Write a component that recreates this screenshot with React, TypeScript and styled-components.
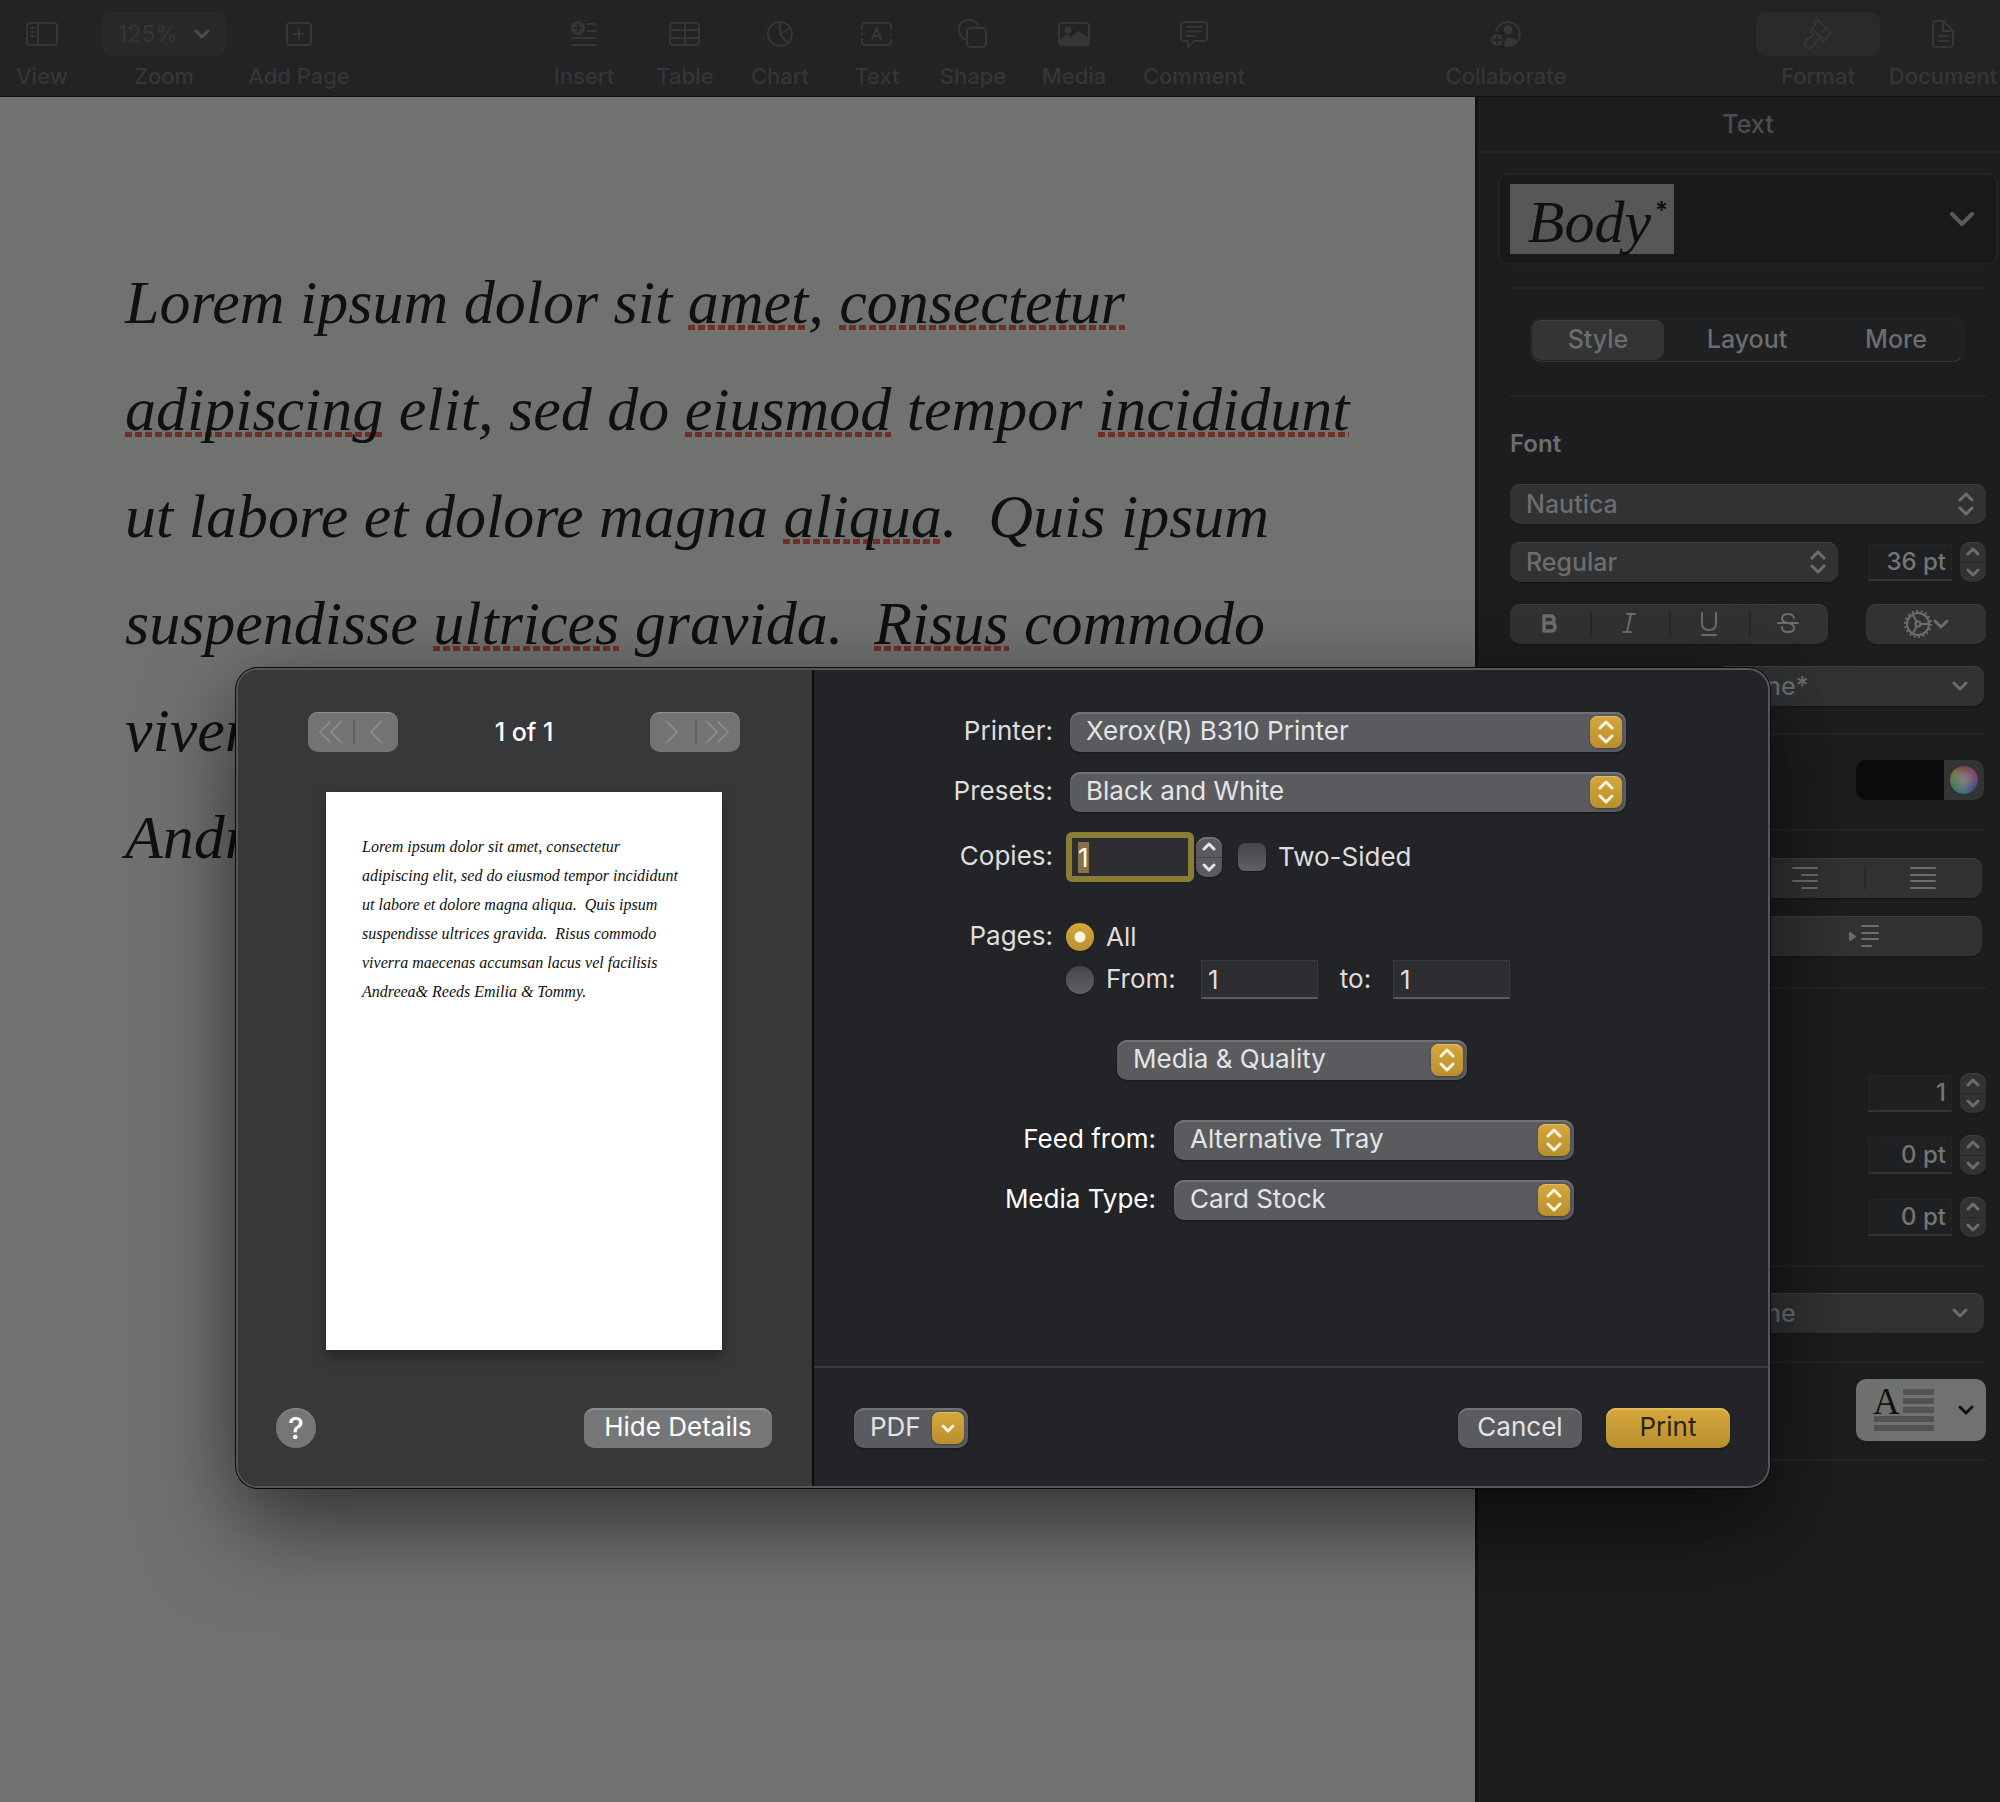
import React, { useEffect, useRef, useState } from "react";
import styled, { createGlobalStyle, css } from "styled-components";

const sans = `Inter, "Open Sans", "Liberation Sans", sans-serif`;
const script = `"Liberation Serif", "DejaVu Serif", serif`;

const GlobalStyle = createGlobalStyle`
  *, *::before, *::after { box-sizing: border-box; }
  body { margin: 0; background: #707270; font-family: ${sans}; }
  button, input, select { font-family: inherit; margin: 0; }
`;

/* ---------- shell ---------- */

const Shell = styled.div`
  position: relative;
  display: flex;
  flex-direction: column;
  min-height: 100vh;
  overflow: hidden;
`;

const Toolbar = styled.header`
  display: flex;
  justify-content: space-between;
  height: 97px;
  padding: 12px 4px 0 0;
  background: #222325;
  border-bottom: 1px solid #0f1011;
  color: #353638;
`;

const ToolGroup = styled.div<{ $gap?: number }>`
  display: flex;
  gap: ${(p) => p.$gap ?? 0}px;
`;

const toolLayout = css<{ $width: number }>`
  display: flex;
  flex-direction: column;
  align-items: center;
  gap: 6px;
  width: ${(p) => p.$width}px;
  padding: 0;
  border: 0;
  background: none;
  color: inherit;
  font-size: 22px;
  font-weight: 500;
  line-height: 28px;
  white-space: nowrap;
`;

const ToolItem = styled.button<{ $width: number }>`
  ${toolLayout}
`;

const ToolField = styled.label<{ $width: number }>`
  ${toolLayout}
`;

const ToolFace = styled.span<{ $filled?: boolean }>`
  display: flex;
  align-items: center;
  justify-content: center;
  width: 100%;
  height: 44px;
  border-radius: 10px;
  background: ${(p) => (p.$filled ? "#292a2c" : "transparent")};
`;

const Workspace = styled.div`
  display: flex;
  flex: 1;
`;

const Canvas = styled.main`
  flex: 1;
  min-width: 0;
  padding: 152px 0 0 125px;
  background: #707270;
`;

const BodyText = styled.p<{ $size: number; $line: number }>`
  margin: 0;
  font-family: ${script};
  font-style: italic;
  font-size: ${(p) => p.$size}px;
  line-height: ${(p) => p.$line}px;
  color: #0f100f;
  white-space: pre;
`;

const Misspelled = styled.span`
  background: repeating-linear-gradient(90deg, #6f2f28 0 7px, transparent 7px 10px) 0 57px / 100% 5px no-repeat;
`;

/* ---------- sidebar ---------- */

const Sidebar = styled.aside`
  flex: none;
  width: 525px;
  background: #1c1d1e;
  border-left: 3px solid #101112;
  color: #6c6d6e;
  font-size: 25px;
`;

const SidebarTitle = styled.h2`
  margin: 0;
  padding: 0 14px 0 32px;
  border-bottom: 2px solid #242526;
  color: #4c4d4e;
  font-size: 25px;
  font-weight: 500;
  line-height: 54px;
  text-align: center;
`;

const Section = styled.section<{ $top: number; $bottom: number; $gap?: number }>`
  display: flex;
  flex-direction: column;
  gap: ${(p) => p.$gap ?? 22}px;
  margin: 0 14px 0 32px;
  padding: ${(p) => p.$top}px 0 ${(p) => p.$bottom}px;
  border-bottom: 2px solid #242526;
`;

const SectionTitle = styled.h3`
  margin: 0;
  color: #6c6d6e;
  font-size: 24px;
  font-weight: 600;
  line-height: 36px;
`;

const Stack = styled.div`
  display: flex;
  flex-direction: column;
  gap: 18px;
`;

const Row = styled.div<{ $end?: boolean }>`
  display: flex;
  align-items: center;
  justify-content: ${(p) => (p.$end ? "flex-end" : "space-between")};
`;

const PopupRow = styled(Row)`
  padding-right: 2px;
`;

const StyleBox = styled.button`
  display: flex;
  align-items: center;
  justify-content: space-between;
  height: 92px;
  margin: 0 -12px;
  padding: 0 22px 0 10px;
  border: 2px solid #222325;
  border-radius: 10px;
  background: #18191a;
  color: #5a5b5c;
`;

const StyleSample = styled.span`
  display: flex;
  justify-content: flex-end;
  width: 164px;
  height: 70px;
  padding-right: 6px;
  background: #565758;
  color: #0f100f;
  font-family: ${script};
  font-style: italic;
  font-size: 60px;
  line-height: 76px;
`;

const Star = styled.sup`
  padding-left: 4px;
  font-family: ${sans};
  font-style: normal;
  font-size: 24px;
  font-weight: 600;
  line-height: 54px;
`;

const Tabs = styled.div`
  display: grid;
  grid-template-columns: 132px 1fr 132px;
  height: 44px;
  margin: 0 22px 0 20px;
  padding: 1px;
  border: 1px solid #29292b;
  border-bottom-color: #343537;
  border-radius: 11px;
  background: #1f2022;
`;

const Tab = styled.button<{ $active?: boolean }>`
  padding: 0 0 2px;
  border: 0;
  border-radius: 9px;
  background: ${(p) => (p.$active ? "#333436" : "transparent")};
  box-shadow: ${(p) => (p.$active ? "inset 0 1px #414244" : "none")};
  color: #6c6d6e;
  font-size: 25px;
  font-weight: 500;
`;

const SegmentBar = styled.div<{ $width: number }>`
  display: flex;
  width: ${(p) => p.$width}px;
  height: 40px;
  border-radius: 10px;
  background: #313234;
  box-shadow: inset 0 1px #3e3f41, 0 1px 1px #161718;
`;

const Segment = styled.button`
  display: flex;
  flex: 1;
  align-items: center;
  justify-content: center;
  padding: 0;
  border: 0;
  background: none;
  color: #6c6d6e;
  & + & {
    background: linear-gradient(#28292b, #28292b) 0 50% / 2px 24px no-repeat;
  }
`;

const SwatchButton = styled.button`
  display: grid;
  grid-template-columns: 1fr 40px;
  width: 128px;
  height: 40px;
  padding: 0;
  overflow: hidden;
  border: 0;
  border-radius: 10px;
  background: #0d0d0d;
`;

const Wheel = styled.span`
  display: grid;
  place-items: center;
  height: 40px;
  background: #333436;
  &::before {
    content: "";
    width: 28px;
    height: 28px;
    border-radius: 50%;
    background: radial-gradient(circle, #7f7f7f 10%, rgba(127, 127, 127, 0) 75%),
      conic-gradient(#7c3c38, #7a3c76 20%, #3a3c84 35%, #35707a 50%, #3c7a48 68%, #6f7a3c 82%, #7c3c38);
  }
`;

const DropCapButton = styled.button`
  display: flex;
  align-items: center;
  justify-content: space-between;
  width: 130px;
  height: 62px;
  padding: 0 12px 0 18px;
  border: 0;
  border-radius: 10px;
  background: #707270;
  color: #111211;
`;

/* ---------- shared controls ---------- */

type Tone = "dim" | "bright" | "tool";

const toneFace = {
  dim: css`
    background: #313234;
    box-shadow: inset 0 1px #3e3f41, 0 1px 1px #161718;
    color: #6c6d6e;
    font-size: 25px;
    font-weight: 500;
  `,
  bright: css`
    background: #5a5b5e;
    box-shadow: inset 0 2px #717275, 0 1px 2px #151618;
    color: #e4e4e5;
    font-size: 26px;
  `,
  tool: css`
    background: #29292b;
    color: #353638;
    font-size: 23px;
  `,
};

const SelectFrame = styled.span<{ $width?: number }>`
  display: grid;
  align-items: center;
  flex: none;
  width: ${(p) => (p.$width ? `${p.$width}px` : "100%")};
`;

const SelectBox = styled.select<{ $tone: Tone }>`
  grid-area: 1 / 1;
  width: 100%;
  height: ${(p) => (p.$tone === "tool" ? 44 : 40)}px;
  padding: 0 40px ${(p) => (p.$tone === "bright" ? 3 : 0)}px 16px;
  appearance: none;
  border: 0;
  border-radius: 10px;
  outline: 0;
  ${(p) => toneFace[p.$tone]}
`;

const SelectMark = styled.span<{ $gold?: boolean; $color?: string; $inset?: number }>`
  grid-area: 1 / 1;
  justify-self: end;
  display: flex;
  align-items: center;
  justify-content: center;
  width: 32px;
  height: 32px;
  margin-right: ${(p) => p.$inset ?? 4}px;
  border-radius: 8px;
  pointer-events: none;
  color: ${(p) => p.$color ?? "#6c6d6e"};
  ${(p) =>
    p.$gold &&
    css`
      background: linear-gradient(#d6a73a, #b98f2f);
      box-shadow: inset 0 1px #e2be68, 0 1px 2px #3c3d40;
      color: #faf3df;
    `}
`;

const StepperFrame = styled.span<{ $tone: Tone }>`
  display: grid;
  grid-template-rows: 1fr 1fr;
  flex: none;
  width: 26px;
  height: 40px;
  overflow: hidden;
  border-radius: 10px;
  ${(p) => toneFace[p.$tone]}
`;

const StepButton = styled.button`
  display: flex;
  align-items: center;
  justify-content: center;
  padding: 0;
  border: 0;
  background: none;
  color: inherit;
  & + & {
    border-top: 1px solid rgba(0, 0, 0, 0.25);
  }
`;

const DimField = styled.input`
  width: 84px;
  height: 37px;
  margin-right: 8px !important;
  padding: 0 5px;
  border: 1px solid #242527;
  border-bottom: 2px solid #343537;
  background: #1f2022;
  color: #747576;
  font-size: 24px;
  font-weight: 500;
  text-align: right;
`;

/* ---------- dialog ---------- */

const Overlay = styled.div`
  position: absolute;
  inset: 0;
  display: flex;
  align-items: flex-start;
  justify-content: center;
  padding: 668px 0 0 6px;
`;

const Dialog = styled.form`
  display: flex;
  width: 1534px;
  max-width: 100%;
  min-height: 820px;
  overflow: hidden;
  border: 2px solid #55565a;
  border-radius: 22px;
  background: #232428;
  box-shadow: 0 0 0 1px #08090a, 0 40px 90px rgba(0, 0, 0, 0.5), 0 0 60px rgba(0, 0, 0, 0.12);
`;

const PreviewPane = styled.div`
  display: flex;
  flex: none;
  flex-direction: column;
  width: 576px;
  padding: 42px 40px 38px 38px;
  border-right: 2px solid #0a0a0b;
  background: #373839;
`;

const Pager = styled.div`
  display: flex;
  align-items: center;
  justify-content: space-between;
  padding: 0 32px;
  color: #ffffff;
  font-size: 25px;
  font-weight: 500;
  line-height: 38px;
`;

const PagerButtons = styled.div`
  display: flex;
  width: 90px;
  height: 40px;
  border-radius: 10px;
  background: #727375;
  box-shadow: inset 0 1px #8e8f90;
`;

const PagerButton = styled.button`
  display: flex;
  flex: 1;
  align-items: center;
  justify-content: center;
  padding: 0;
  border: 0;
  background: none;
  color: #88898a;
  & + & {
    background: linear-gradient(#606163, #606163) 0 50% / 2px 24px no-repeat;
  }
`;

const Sheet = styled.div`
  align-self: center;
  width: 396px;
  height: 558px;
  margin: 40px 0 58px;
  padding: 40px 36px;
  background: #ffffff;
  box-shadow: 0 6px 12px rgba(0, 0, 0, 0.35);
`;

const PushButton = styled.button<{ $tone: "light" | "plain" | "gold"; $width: number }>`
  width: ${(p) => p.$width}px;
  height: 40px;
  padding: 0 0 3px;
  border: 0;
  border-radius: 10px;
  font-size: 26px;
  ${(p) =>
    ({
      light: css`
        background: #757678;
        box-shadow: inset 0 2px #8c8d8e;
        color: #ffffff;
      `,
      plain: css`
        background: #5a5b5e;
        box-shadow: inset 0 2px #717275, 0 1px 2px #151618;
        color: #e4e4e5;
      `,
      gold: css`
        background: linear-gradient(#d6a73a, #b98f2f);
        box-shadow: inset 0 2px #dfb95c, 0 1px 2px #151618;
        color: #2b2312;
      `,
    })[p.$tone]}
`;

const HelpButton = styled.button`
  width: 40px;
  height: 40px;
  padding: 0;
  border: 0;
  border-radius: 50%;
  background: #757678;
  box-shadow: inset 0 1px #8c8d8e;
  color: #ffffff;
  font-size: 30px;
  font-weight: 500;
`;

const SettingsPane = styled.div`
  display: flex;
  flex: 1;
  flex-direction: column;
  min-width: 0;
  color: #dededf;
  font-size: 26px;
`;

const Settings = styled.div`
  display: flex;
  flex: 1;
  flex-direction: column;
  padding-top: 42px;
`;

const Line = styled.div<{ $label: number; $gap: number; $height: number; $after: number; $strong?: boolean }>`
  display: grid;
  grid-template-columns: ${(p) => p.$label}px 1fr;
  column-gap: ${(p) => p.$gap}px;
  align-items: center;
  height: ${(p) => p.$height}px;
  margin-bottom: ${(p) => p.$after}px;
  color: ${(p) => (p.$strong ? "#ffffff" : "inherit")};
`;

const Label = styled.label`
  padding: 0 1px 3px 0;
  text-align: right;
  white-space: nowrap;
`;

const Controls = styled.div<{ $indent?: boolean }>`
  display: flex;
  align-items: center;
  padding-left: ${(p) => (p.$indent ? 4 : 0)}px;
`;

const CopiesField = styled.input`
  width: 128px;
  height: 50px;
  margin-right: 2px !important;
  padding: 0 6px;
  border: 6px solid #8c7d35;
  border-radius: 6px;
  outline: 0;
  background: #2d2e32;
  color: #ffffff;
  font-size: 26px;
  line-height: 32px;
  &::selection {
    background: #8a7048;
    color: #ffffff;
  }
`;

const PageField = styled.input`
  width: 117px;
  height: 39px;
  padding: 0 6px;
  border: 1px solid #3a3b3f;
  border-bottom: 2px solid #5c5d60;
  background: #2d2e32;
  color: #dededf;
  font-size: 26px;
`;

const tickBase = css`
  flex: none;
  width: 28px;
  height: 28px;
  appearance: none;
  background: linear-gradient(#45464a, #606165);
  box-shadow: 0 1px 1px #17181a;
`;

const CheckBox = styled.input`
  ${tickBase}
  && {
    margin-left: 16px;
  }
  border-radius: 7px;
`;

const Radio = styled.input`
  ${tickBase}
  border-radius: 50%;
  &:checked {
    background: radial-gradient(circle, #faf3df 0 5px, transparent 6px), linear-gradient(#d6a73a, #b98f2f);
  }
`;

const TickLabel = styled.label<{ $width?: number }>`
  width: ${(p) => (p.$width ? `${p.$width}px` : "auto")};
  padding: 0 0 2px 12px;
  white-space: nowrap;
`;

const ToLabel = styled.label`
  width: 75px;
  padding-bottom: 2px;
  text-align: center;
`;

const CenterLine = styled.div`
  display: flex;
  justify-content: center;
  margin-bottom: 40px;
  padding-left: 2px;
`;

const Footer = styled.footer`
  display: flex;
  align-items: flex-start;
  gap: 24px;
  height: 120px;
  padding: 40px 38px 0 40px;
  border-top: 2px solid #3a3b3e;
`;

const PdfButton = styled.button`
  display: flex;
  align-items: center;
  justify-content: space-between;
  width: 114px;
  height: 40px;
  margin-right: auto !important;
  padding: 0 0 0 16px;
  border: 0;
  border-radius: 10px;
  ${toneFace.bright}
`;

const PdfText = styled.span`
  padding-bottom: 3px;
`;

/* ---------- icons ---------- */

type IconProps = { w: number; h: number; sw?: number; children: React.ReactNode };

const Icon = ({ w, h, sw = 2, children }: IconProps) => (
  <svg width={w} height={h} viewBox={`0 0 ${w} ${h}`} fill="none" stroke="currentColor" strokeWidth={sw} strokeLinecap="round" strokeLinejoin="round" aria-hidden="true">
    {children}
  </svg>
);

const ChevronDown = ({ w = 14, sw = 3 }: { w?: number; sw?: number }) => (
  <Icon w={w + 4} h={w / 2 + 4} sw={sw}>
    <path d={`M2 2 L${w / 2 + 2} ${w / 2 + 2} L${w + 2} 2`} />
  </Icon>
);

const ChevronUp = () => (
  <Icon w={14} h={10} sw={3}>
    <path d="M2 7 L7 2 L12 7" />
  </Icon>
);

const UpDown = () => (
  <Icon w={18} h={24} sw={3}>
    <path d="M3 8 L9 2 L15 8 M3 16 L9 22 L15 16" />
  </Icon>
);

const ViewIcon = () => (
  <Icon w={32} h={26}>
    <rect x="1" y="2" width="30" height="22" rx="3" />
    <path d="M12 2 V24 M5 7 H8 M5 11 H8 M5 15 H8" />
  </Icon>
);
const AddPageIcon = () => (
  <Icon w={26} h={26}>
    <rect x="1" y="2" width="24" height="22" rx="3" />
    <path d="M13 8 V18 M8 13 H18" />
  </Icon>
);
const InsertIcon = () => (
  <Icon w={28} h={28}>
    <circle cx="8" cy="8" r="6" fill="currentColor" />
    <path d="M8 4.5 V11.5 M4.5 8 H11.5" stroke="#222325" />
    <path d="M17 4 H26 M17 11 H26 M2 18 H26 M2 25 H26" />
  </Icon>
);
const TableIcon = () => (
  <Icon w={32} h={26}>
    <rect x="1" y="2" width="29" height="22" rx="3" />
    <path d="M1 9 H30 M1 17 H30 M16 2 V24" />
  </Icon>
);
const ChartIcon = () => (
  <Icon w={28} h={28}>
    <circle cx="14" cy="14" r="12" />
    <path d="M14 2 V14 L22 23 M14 14 L24 8" />
  </Icon>
);
const TextIcon = () => (
  <Icon w={34} h={26}>
    <path d="M2 8 V5 Q2 2 5 2 H28 Q31 2 31 5 V8 M2 18 V21 Q2 24 5 24 H28 Q31 24 31 21 V18 M2 13 V13.1 M31 13 V13.1" />
    <path d="M12 18 L16.5 7 L21 18 M13.5 15 H19.5" />
  </Icon>
);
const ShapeIcon = () => (
  <Icon w={32} h={32}>
    <path d="M8 21 A10 10 0 1 1 21 8" />
    <rect x="10" y="10" width="19" height="19" rx="4" />
  </Icon>
);
const MediaIcon = () => (
  <Icon w={32} h={26}>
    <rect x="1" y="2" width="30" height="22" rx="3" />
    <circle cx="10" cy="9" r="2.5" fill="currentColor" />
    <path d="M1 21 L9 14 L13 17 L21 11 L31 19 V22 Q31 24 28 24 H4 Q1 24 1 21 Z" fill="currentColor" />
  </Icon>
);
const CommentIcon = () => (
  <Icon w={30} h={28}>
    <path d="M5 2 H25 Q28 2 28 5 V18 Q28 21 25 21 H15 L9 27 V21 H5 Q2 21 2 18 V5 Q2 2 5 2 Z" />
    <path d="M8 7 H22 M8 11.5 H22 M8 16 H17" />
  </Icon>
);
const CollaborateIcon = () => (
  <Icon w={34} h={28}>
    <path d="M7 12 A12 12 0 1 1 19 26" />
    <circle cx="19" cy="10" r="3.5" fill="currentColor" />
    <path d="M16 25 V20 Q22 17 27 21 Q24 26 17 26 Z" fill="currentColor" />
    <circle cx="8" cy="20" r="7" fill="currentColor" stroke="#222325" />
    <path d="M8 16.5 V23.5 M4.5 20 H11.5" stroke="#222325" />
  </Icon>
);
const FormatIcon = () => (
  <Icon w={30} h={32}>
    <path d="M15 2 L27 14 Q28 15 27 16 L21 23 Q20 24 19 23 L17 21 Q15 20 14 22 L10 28 Q7 32 3 29 Q0 26 3 22 Q4 21 8 19 Q11 17 9 15 L8 14 Q7 13 8 12 L12 7 Q13 2 15 2 Z" />
    <path d="M9 11 L21 22 M20 13 Q23 12 24 9 M5 26 V26.1" />
  </Icon>
);
const DocumentIcon = () => (
  <Icon w={24} h={30}>
    <path d="M5 2 H13 L22 12 V25 Q22 28 19 28 H5 Q2 28 2 25 V5 Q2 2 5 2 Z M12 2 V12 H22 M7 17 H17 M7 22 H17" />
  </Icon>
);
const GearIcon = () => (
  <Icon w={30} h={30}>
    <circle cx="15" cy="15" r="11" />
    <circle cx="15" cy="15" r="13" strokeWidth="2" strokeDasharray="2 2.54" strokeLinecap="butt" />
    <circle cx="15" cy="15" r="2.5" />
    <path d="M17.5 15 H26 M14 13 L9.5 5.5 M14 17 L9.5 24.5" />
  </Icon>
);
const Glyph = ({ kind }: { kind: "bold" | "italic" | "underline" | "strike" }) => {
  const shapes = {
    bold: <path d="M6 5 H12 Q16 5 16 8.5 Q16 12 12 12 H6 Z M6 12 H13 Q17 12 17 16 Q17 20 13 20 H6 Z" strokeWidth="3.5" />,
    italic: <path d="M10 3 H18 M6 21 H14 M14 3 L10 21" />,
    underline: <path d="M5 2 V12 Q5 19 12 19 Q19 19 19 12 V2 M5 24 H19" />,
    strike: <path d="M18 7 Q17 3 12 3 Q6 3 6 7.5 Q6 11 12 12 Q18 13 18 17 Q18 21 12 21 Q6 21 6 16 M2 12 H22" />,
  };
  return (
    <Icon w={24} h={26}>
      {shapes[kind]}
    </Icon>
  );
};
const AlignRight = () => (
  <Icon w={28} h={26}>
    <path d="M2 3 H26 M11 10 H26 M2 16 H26 M11 23 H26" />
  </Icon>
);
const Justify = () => (
  <Icon w={28} h={26}>
    <path d="M2 3 H26 M2 10 H26 M2 16 H26 M2 23 H26" />
  </Icon>
);
const Indent = () => (
  <Icon w={32} h={26}>
    <path d="M2 10 L7 13.5 L2 17 Z" fill="currentColor" />
    <path d="M14 3 H30 M14 10 H30 M14 16 H30 M14 23 H23" />
  </Icon>
);
const DropCap = () => (
  <svg width="62" height="46" viewBox="0 0 62 46" overflow="visible" aria-hidden="true">
    <text x="-1" y="27" fontFamily="Liberation Serif, serif" fontSize="37" fill="#111211">
      A
    </text>
    <path d="M29 5 H60 M29 14 H60 M29 23 H60 M0 32 H60 M0 41 H60" stroke="#515352" strokeWidth="6" />
  </svg>
);
const Angles = ({ flip, double }: { flip?: boolean; double?: boolean }) => {
  const left = double ? "M12 2 L2 12 L12 22 M23 2 L13 12 L23 22" : "M12 2 L2 12 L12 22";
  const right = double ? "M2 2 L12 12 L2 22 M13 2 L23 12 L13 22" : "M2 2 L12 12 L2 22";
  return (
    <Icon w={double ? 25 : 14} h={24} sw={2}>
      <path d={flip ? right : left} />
    </Icon>
  );
};

/* ---------- pieces ---------- */

const Picker = ({ id, label, value, width, tone, single }: { id: string; label?: string; value: string; width?: number; tone: Tone; single?: boolean }) => (
  <SelectFrame $width={width}>
    <SelectBox id={id} aria-label={label} $tone={tone} defaultValue={value}>
      <option>{value}</option>
    </SelectBox>
    <SelectMark $gold={tone === "bright"} $inset={single ? 8 : 4} $color={tone === "tool" ? "#4c4d4f" : undefined}>
      {single ? <ChevronDown w={12} /> : <UpDown />}
    </SelectMark>
  </SelectFrame>
);

const Stepper = ({ name, tone }: { name: string; tone: Tone }) => (
  <StepperFrame $tone={tone}>
    <StepButton type="button" aria-label={`Increase ${name}`}>
      <ChevronUp />
    </StepButton>
    <StepButton type="button" aria-label={`Decrease ${name}`}>
      <ChevronDown w={10} />
    </StepButton>
  </StepperFrame>
);

const Spinner = ({ name, value }: { name: string; value: string }) => (
  <Row $end>
    <DimField aria-label={name} defaultValue={value} />
    <Stepper name={name} tone="dim" />
  </Row>
);

const Tool = ({ label, width, filled, children }: { label: string; width: number; filled?: boolean; children: React.ReactNode }) => (
  <ToolItem type="button" $width={width}>
    <ToolFace $filled={filled}>{children}</ToolFace>
    {label}
  </ToolItem>
);

/* Words between underscores are flagged by the spelling checker. */
const letter = [
  "Lorem ipsum dolor sit _amet_, _consectetur_",
  "_adipiscing_ elit, sed do _eiusmod_ tempor _incididunt_",
  "ut labore et dolore magna _aliqua_.  Quis ipsum",
  "suspendisse _ultrices_ gravida.  _Risus_ commodo",
  "viverra maecenas accumsan lacus vel facilisis",
  "Andreea& Reeds Emilia & Tommy.",
];

const Letter = ({ size, line, marks }: { size: number; line: number; marks?: boolean }) => (
  <BodyText $size={size} $line={line}>
    {letter.map((row, r) => (
      <React.Fragment key={r}>
        {row.split("_").map((part, i) => (i % 2 && marks ? <Misspelled key={i}>{part}</Misspelled> : part))}
        {"\n"}
      </React.Fragment>
    ))}
  </BodyText>
);

const FormatSidebar = () => (
  <Sidebar>
    <SidebarTitle>Text</SidebarTitle>
    <Section $top={20} $bottom={22}>
      <StyleBox type="button">
        <StyleSample>
          Body<Star>*</Star>
        </StyleSample>
        <ChevronDown w={20} sw={4} />
      </StyleBox>
    </Section>
    <Section $top={29} $bottom={33}>
      <Tabs>
        <Tab type="button" $active>
          Style
        </Tab>
        <Tab type="button">Layout</Tab>
        <Tab type="button">More</Tab>
      </Tabs>
    </Section>
    <Section $top={29} $bottom={27}>
      <SectionTitle>Font</SectionTitle>
      <Stack>
        <Picker id="family" label="Font family" value="Nautica" tone="dim" />
        <Row>
          <Picker id="face" label="Typeface" value="Regular" width={328} tone="dim" />
          <Spinner name="Font size" value="36 pt" />
        </Row>
      </Stack>
      <Row>
        <SegmentBar $width={318}>
          <Segment type="button" aria-label="Bold"><Glyph kind="bold" /></Segment>
          <Segment type="button" aria-label="Italic"><Glyph kind="italic" /></Segment>
          <Segment type="button" aria-label="Underline"><Glyph kind="underline" /></Segment>
          <Segment type="button" aria-label="Strikethrough"><Glyph kind="strike" /></Segment>
        </SegmentBar>
        <SegmentBar $width={120}>
          <Segment type="button" aria-label="Advanced options">
            <GearIcon />
            <ChevronDown w={12} />
          </Segment>
        </SegmentBar>
      </Row>
      <PopupRow $end>
        <Picker id="charstyle" label="Character style" value="None*" width={268} tone="dim" single />
      </PopupRow>
    </Section>
    <Section $top={25} $bottom={29}>
      <PopupRow $end>
        <SwatchButton type="button" aria-label="Text color">
          <span />
          <Wheel />
        </SwatchButton>
      </PopupRow>
    </Section>
    <Section $top={27} $bottom={31} $gap={18}>
      <SegmentBar $width={472}>
        <Segment type="button" aria-label="Align left" />
        <Segment type="button" aria-label="Align center" />
        <Segment type="button" aria-label="Align right"><AlignRight /></Segment>
        <Segment type="button" aria-label="Justify"><Justify /></Segment>
      </SegmentBar>
      <SegmentBar $width={472}>
        <Segment type="button" aria-label="Decrease indent" />
        <Segment type="button" aria-label="Increase indent"><Indent /></Segment>
      </SegmentBar>
    </Section>
    <Section $top={84} $bottom={28}>
      <Spinner name="Line spacing" value="1" />
      <Spinner name="Before paragraph" value="0 pt" />
      <Spinner name="After paragraph" value="0 pt" />
    </Section>
    <Section $top={26} $bottom={28}>
      <PopupRow $end>
        <Picker id="bullets" label="Bullets and lists" value="None" width={268} tone="dim" single />
      </PopupRow>
    </Section>
    <Section $top={16} $bottom={18}>
      <Row $end>
        <DropCapButton type="button" aria-label="Drop cap">
          <DropCap />
          <ChevronDown w={12} />
        </DropCapButton>
      </Row>
    </Section>
  </Sidebar>
);

const PrintDialog = () => {
  const copies = useRef<HTMLInputElement>(null);
  const [range, setRange] = useState("all");
  useEffect(() => {
    copies.current?.focus({ preventScroll: true });
    copies.current?.select();
  }, []);
  return (
    <Overlay>
      <Dialog role="dialog" aria-label="Print" onSubmit={(e) => e.preventDefault()}>
        <PreviewPane>
          <Pager>
            <PagerButtons>
              <PagerButton type="button" aria-label="First page"><Angles double /></PagerButton>
              <PagerButton type="button" aria-label="Previous page"><Angles /></PagerButton>
            </PagerButtons>
            1 of 1
            <PagerButtons>
              <PagerButton type="button" aria-label="Next page"><Angles flip /></PagerButton>
              <PagerButton type="button" aria-label="Last page"><Angles flip double /></PagerButton>
            </PagerButtons>
          </Pager>
          <Sheet>
            <Letter size={16} line={29} />
          </Sheet>
          <Row>
            <HelpButton type="button" aria-label="Help">?</HelpButton>
            <PushButton type="button" $tone="light" $width={188}>Hide Details</PushButton>
          </Row>
        </PreviewPane>
        <SettingsPane>
          <Settings>
            <Line $label={240} $gap={12} $height={40} $after={20}>
              <Label htmlFor="printer">Printer:</Label>
              <Controls $indent><Picker id="printer" value="Xerox(R) B310 Printer" width={556} tone="bright" /></Controls>
            </Line>
            <Line $label={240} $gap={12} $height={40} $after={20}>
              <Label htmlFor="presets">Presets:</Label>
              <Controls $indent><Picker id="presets" value="Black and White" width={556} tone="bright" /></Controls>
            </Line>
            <Line $label={240} $gap={12} $height={50} $after={38}>
              <Label htmlFor="copies">Copies:</Label>
              <Controls>
                <CopiesField id="copies" ref={copies} defaultValue="1" />
                <Stepper name="copies" tone="bright" />
                <CheckBox id="duplex" type="checkbox" />
                <TickLabel htmlFor="duplex">Two-Sided</TickLabel>
              </Controls>
            </Line>
            <Line $label={240} $gap={12} $height={28} $after={12}>
              <Label as="span">Pages:</Label>
              <Controls>
                <Radio id="all" type="radio" name="pages" checked={range === "all"} onChange={() => setRange("all")} />
                <TickLabel htmlFor="all">All</TickLabel>
              </Controls>
            </Line>
            <Line $label={240} $gap={12} $height={38} $after={42}>
              <span />
              <Controls>
                <Radio id="from" type="radio" name="pages" checked={range === "from"} onChange={() => setRange("from")} />
                <TickLabel htmlFor="from" $width={107}>From:</TickLabel>
                <PageField aria-label="From page" defaultValue="1" />
                <ToLabel htmlFor="to">to:</ToLabel>
                <PageField id="to" defaultValue="1" />
              </Controls>
            </Line>
            <CenterLine>
              <Picker id="panel" label="Options" value="Media &amp; Quality" width={350} tone="bright" />
            </CenterLine>
            <Line $label={343} $gap={17} $height={40} $after={20} $strong>
              <Label htmlFor="feed">Feed from:</Label>
              <Picker id="feed" value="Alternative Tray" width={400} tone="bright" />
            </Line>
            <Line $label={343} $gap={17} $height={40} $after={20} $strong>
              <Label htmlFor="media">Media Type:</Label>
              <Picker id="media" value="Card Stock" width={400} tone="bright" />
            </Line>
          </Settings>
          <Footer>
            <PdfButton type="button">
              <PdfText>PDF</PdfText>
              <SelectMark $gold><ChevronDown w={10} /></SelectMark>
            </PdfButton>
            <PushButton type="button" $tone="plain" $width={124}>Cancel</PushButton>
            <PushButton type="submit" $tone="gold" $width={124}>Print</PushButton>
          </Footer>
        </SettingsPane>
      </Dialog>
    </Overlay>
  );
};

export default function App() {
  return (
    <>
      <GlobalStyle />
      <Shell>
        <Toolbar>
          <ToolGroup $gap={18}>
            <Tool label="View" width={84}><ViewIcon /></Tool>
            <ToolField htmlFor="zoom" $width={124}>
              <Picker id="zoom" value="125%" tone="tool" single />
              Zoom
            </ToolField>
            <Tool label="Add Page" width={110}><AddPageIcon /></Tool>
          </ToolGroup>
          <ToolGroup>
            <Tool label="Insert" width={100}><InsertIcon /></Tool>
            <Tool label="Table" width={102}><TableIcon /></Tool>
            <Tool label="Chart" width={88}><ChartIcon /></Tool>
            <Tool label="Text" width={106}><TextIcon /></Tool>
            <Tool label="Shape" width={86}><ShapeIcon /></Tool>
            <Tool label="Media" width={116}><MediaIcon /></Tool>
            <Tool label="Comment" width={124}><CommentIcon /></Tool>
          </ToolGroup>
          <Tool label="Collaborate" width={140}><CollaborateIcon /></Tool>
          <ToolGroup $gap={10}>
            <Tool label="Format" width={124} filled><FormatIcon /></Tool>
            <Tool label="Document" width={106}><DocumentIcon /></Tool>
          </ToolGroup>
        </Toolbar>
        <Workspace>
          <Canvas>
            <Letter size={62} line={107} marks />
          </Canvas>
          <FormatSidebar />
        </Workspace>
        <PrintDialog />
      </Shell>
    </>
  );
}
